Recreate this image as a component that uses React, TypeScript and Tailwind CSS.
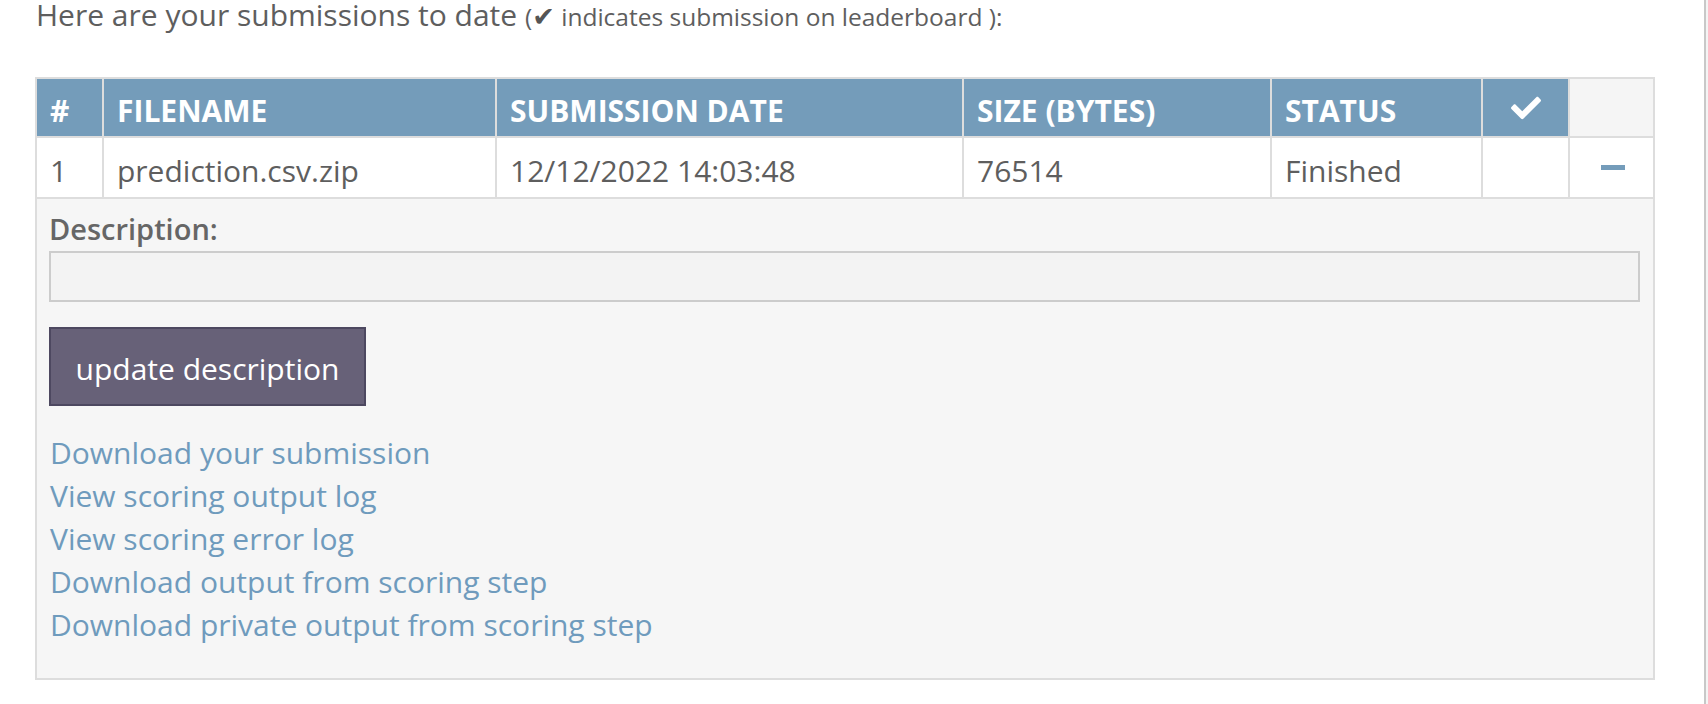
import { FaCheck } from 'react-icons/fa'

const cols = 'grid grid-cols-[67px_393px_467px_308px_211px_87px_83px]'

const links = [
  'Download your submission',
  'View scoring output log',
  'View scoring error log',
  'Download output from scoring step',
  'Download private output from scoring step',
]

function HeadCell({ children, last }: { children?: React.ReactNode; last?: boolean }) {
  return (
    <div
      className={`flex items-center pt-[5px] pl-[13px] bg-[#749cba] text-white font-bold ${last ? '' : 'border-r-2 border-[#ddd]'}`}
    >
      {children}
    </div>
  )
}

function Cell({ children }: { children?: React.ReactNode }) {
  return <div className="flex items-center pt-[6px] pl-[13px] border-r-2 border-[#ddd]">{children}</div>
}

export default function App() {
  return (
    <div className="flex h-[704px] bg-white text-[30px] text-[#5e5e5e]" style={{ fontFamily: '"Open Sans", "Noto Sans", sans-serif' }}>
      <div className="w-[1704px]">
        <div className="pt-[2px] pl-[36px] h-[28px] leading-[26px] whitespace-nowrap">
          Here are your submissions to date{' '}
          <span className="text-[24.5px] leading-none">
            (<span className="text-[27px] text-[#555]" style={{ fontFamily: '"DejaVu Sans", sans-serif' }}>✔</span> indicates submission on leaderboard ):
          </span>
        </div>

        <div className="mt-[49px] ml-[35px] w-[1620px] border-2 border-[#ddd]">
          <div className={`${cols} h-[59px] border-b-2 border-[#ddd]`}>
            <HeadCell>#</HeadCell>
            <HeadCell>FILENAME</HeadCell>
            <HeadCell>SUBMISSION DATE</HeadCell>
            <HeadCell>SIZE (BYTES)</HeadCell>
            <HeadCell>STATUS</HeadCell>
            <div className="flex items-center justify-center bg-[#749cba] border-r-2 border-[#ddd]">
              <FaCheck size={30} className="text-white" />
            </div>
            <div className="bg-[#f5f5f5]" />
          </div>

          <div className={`${cols} h-[61px] border-b-2 border-[#ddd] bg-white`}>
            <Cell>1</Cell>
            <Cell>prediction.csv.zip</Cell>
            <Cell>12/12/2022 14:03:48</Cell>
            <Cell>76514</Cell>
            <Cell>Finished</Cell>
            <Cell />
            <div className="flex items-center justify-center pl-[3px]">
              <div className="w-[24px] h-[5px] bg-[#749cba]" />
            </div>
          </div>

          <div className="bg-[#f6f6f6] pt-[13px] pb-[32px] pl-[12px] pr-[13px]">
            <div className="text-[29px] leading-[34px] font-semibold text-[#666]">Description:</div>
            <div className="mt-[5px] h-[51px] border-2 border-[#ccc] bg-[#f3f3f3]" />
            <button className="mt-[25px] flex items-center justify-center w-[317px] h-[79px] pt-[4px] border-2 border-[#4d4860] bg-[#676178] text-white">
              update description
            </button>
            <div className="mt-[25px] flex flex-col items-start leading-[43px] text-[#6f9bbd]">
              {links.map((l) => (
                <a key={l} href="#" className="pl-[1px]">
                  {l}
                </a>
              ))}
            </div>
          </div>
        </div>
      </div>
      <div className="w-[4px] h-[704px] border-l-2 border-[#c8c8c8] bg-[#f4f4f4]" />
    </div>
  )
}
